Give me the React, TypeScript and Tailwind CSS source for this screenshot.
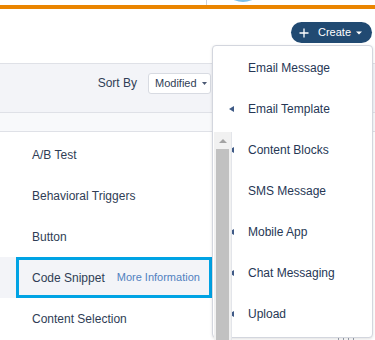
import React from "react";

const menuItems: { label: string; mark: boolean }[] = [
  { label: "Email Message", mark: false },
  { label: "Email Template", mark: true },
  { label: "Content Blocks", mark: true },
  { label: "SMS Message", mark: false },
  { label: "Mobile App", mark: true },
  { label: "Chat Messaging", mark: true },
  { label: "Upload", mark: true },
];

const listItems = ["A/B Test", "Behavioral Triggers", "Button", "Code Snippet", "Content Selection"];

export default function App() {
  return (
    <div
      className="relative w-[375px] h-[340px] overflow-hidden bg-white"
      style={{ fontFamily: '"Liberation Sans", Arial, sans-serif' }}
    >
      {/* top strip */}
      <div className="relative h-[5px]">
        <div className="absolute left-[206px] top-0 w-[1px] h-[5px] bg-[#cfd2dc]" />
        <div className="absolute left-[221px] top-[-42px] w-[44px] h-[44px] rounded-full bg-[#7cc0ea]" />
      </div>
      <div className="h-[4px] bg-[#ea8500]" />

      {/* create area */}
      <div className="h-[54px] flex justify-end items-start pt-[13px] pr-[3px]">
        <button className="h-[21px] w-[81px] rounded-full bg-[#214a72] flex items-center pl-[8px] text-white text-[11px]">
          <svg width="10" height="10" viewBox="0 0 10 10" className="shrink-0">
            <path d="M5 0.5V9.5M0.5 5H9.5" stroke="white" strokeWidth="1.3" />
          </svg>
          <span className="ml-[9px]">Create</span>
          <svg width="6" height="4" viewBox="0 0 6 4" className="ml-[5px] mt-[1px]">
            <path d="M0 0.5H6L3 3.5Z" fill="white" />
          </svg>
        </button>
      </div>

      {/* header sort bar */}
      <div className="h-[49px] border-t border-[#dfe1e7] bg-[#f3f4f8] flex items-start pt-[9px] justify-end pr-[164px]">
        <span className="text-[12px] text-[#2f3d55] leading-[21px]">Sort By</span>
        <div className="ml-[11px] h-[21px] w-[63px] bg-white border border-[#d8dbe2] rounded-[3px] flex items-center pl-[6px] text-[11px] text-[#2f3d55]">
          <span>Modified</span>
          <svg width="5" height="3" viewBox="0 0 5 3" className="ml-[5px]">
            <path d="M0 0H5L2.5 3Z" fill="#4a5873" />
          </svg>
        </div>
      </div>
      <div className="h-[20px] border-y border-[#dfe1e7] bg-[#f8f9fb]" />

      {/* list */}
      <div className="flex">
        <div className="w-[214px] pt-[2px]">
          {listItems.map((item) =>
            item === "Code Snippet" ? (
              <div key={item} className="h-[41px] bg-[#f3f4f8] flex">
                <div className="ml-[16px] w-[196px] h-[41px] border-[3px] border-[#00a3e4] flex items-center pl-[13px]">
                  <span className="text-[12px] text-[#2f3d55]">Code Snippet</span>
                  <span className="ml-[12px] text-[11px] text-[#5181c0]">More Information</span>
                </div>
              </div>
            ) : (
              <div key={item} className="h-[41px] flex items-center pl-[32px] text-[12px] text-[#2f3d55]">
                {item}
              </div>
            )
          )}
        </div>
        <div className="relative z-20 w-[18px] pt-[1px] flex flex-col border-r border-[#e3e5ea] bg-[#f1f1f1]">
          <div className="h-[16px] flex items-center justify-center">
            <svg width="8" height="4" viewBox="0 0 8 4">
              <path d="M0 4H8L4 0Z" fill="#a3a3a3" />
            </svg>
          </div>
          <div className="mx-[2px] h-[200px] bg-[#c1c1c1]" />
        </div>
      </div>

      {/* dropdown menu */}
      <div className="absolute z-10 left-[212px] top-[45px] w-[161px] h-[293px] bg-white border border-[#d3d6de] rounded-[4px] shadow-[0_1px_3px_rgba(0,0,0,0.12)] pt-[1px]">
        {menuItems.map((m) => (
          <div key={m.label} className="relative h-[41px] flex items-center pl-[35px] text-[12px] text-[#263755]">
            {m.mark && (
              <svg width="5" height="6" viewBox="0 0 5 6" className="absolute left-[16px] top-[18px]">
                <path d="M5 0V6L0 3Z" fill="#3f5a86" />
              </svg>
            )}
            {m.label}
          </div>
        ))}
      </div>

      {/* bits peeking under menu */}
      <div className="absolute left-[338px] top-[338px] flex gap-[4px]">
        <div className="w-[1px] h-[2px] bg-[#9aa0ad]" />
        <div className="w-[1px] h-[2px] bg-[#9aa0ad]" />
        <div className="w-[1px] h-[2px] bg-[#9aa0ad]" />
        <div className="w-[1px] h-[2px] bg-[#9aa0ad]" />
      </div>
    </div>
  );
}
